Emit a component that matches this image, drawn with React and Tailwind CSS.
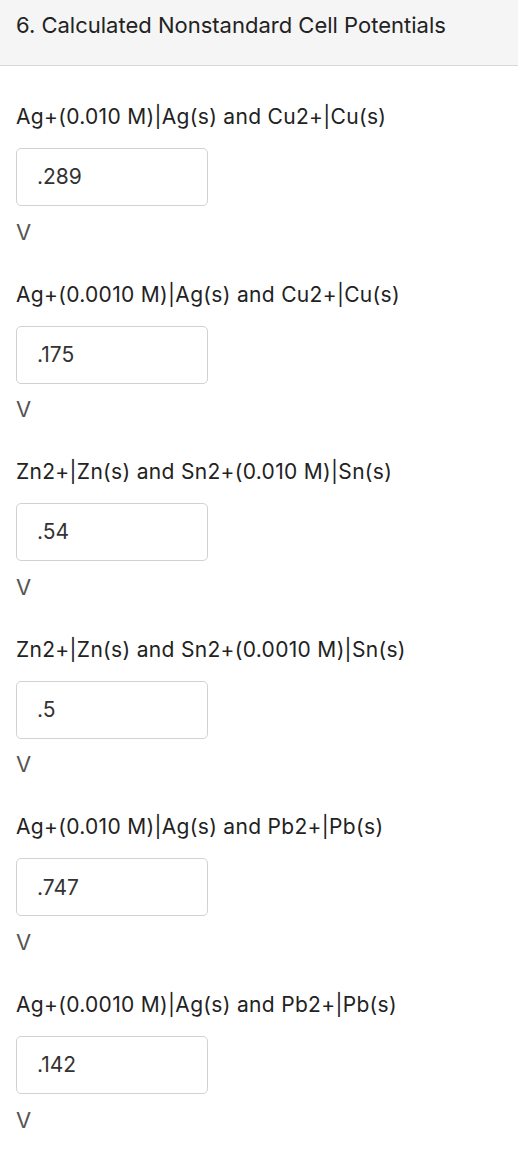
const items = [
  { label: 'Ag+(0.010 M)|Ag(s) and Cu2+|Cu(s)', value: '.289' },
  { label: 'Ag+(0.0010 M)|Ag(s) and Cu2+|Cu(s)', value: '.175' },
  { label: 'Zn2+|Zn(s) and Sn2+(0.010 M)|Sn(s)', value: '.54' },
  { label: 'Zn2+|Zn(s) and Sn2+(0.0010 M)|Sn(s)', value: '.5' },
  { label: 'Ag+(0.010 M)|Ag(s) and Pb2+|Pb(s)', value: '.747' },
  { label: 'Ag+(0.0010 M)|Ag(s) and Pb2+|Pb(s)', value: '.142' },
];

function Question({ label, value }) {
  return (
    <div className="flex flex-col items-start">
      <p className="text-[21px] leading-[28px] tracking-[0.015em] text-[#222]">{label}</p>
      <div className="mt-[17px] w-[192px] h-[58px] rounded-[5px] border border-[#cfd2d6] flex items-center px-[20px] text-[21px] text-[#333]">
        {value}
      </div>
      <span className="mt-[13.6px] text-[22px] leading-[24px] text-[#555]">V</span>
    </div>
  );
}

export default function App() {
  return (
    <div className="w-[518px] min-h-[1152px] bg-white" style={{ fontFamily: 'Inter, "Noto Sans", sans-serif' }}>
      <div className="h-[66px] bg-[#f5f5f5] border-b border-[#d9d9d9] px-[16px] pt-[11px]">
        <h1 className="text-[22px] leading-[28px] text-[#222]">6. Calculated Nonstandard Cell Potentials</h1>
      </div>
      <div className="px-[16px] pt-[37px] flex flex-col gap-[37px]">
        {items.map((it) => (
          <Question key={it.label} {...it} />
        ))}
      </div>
    </div>
  );
}
